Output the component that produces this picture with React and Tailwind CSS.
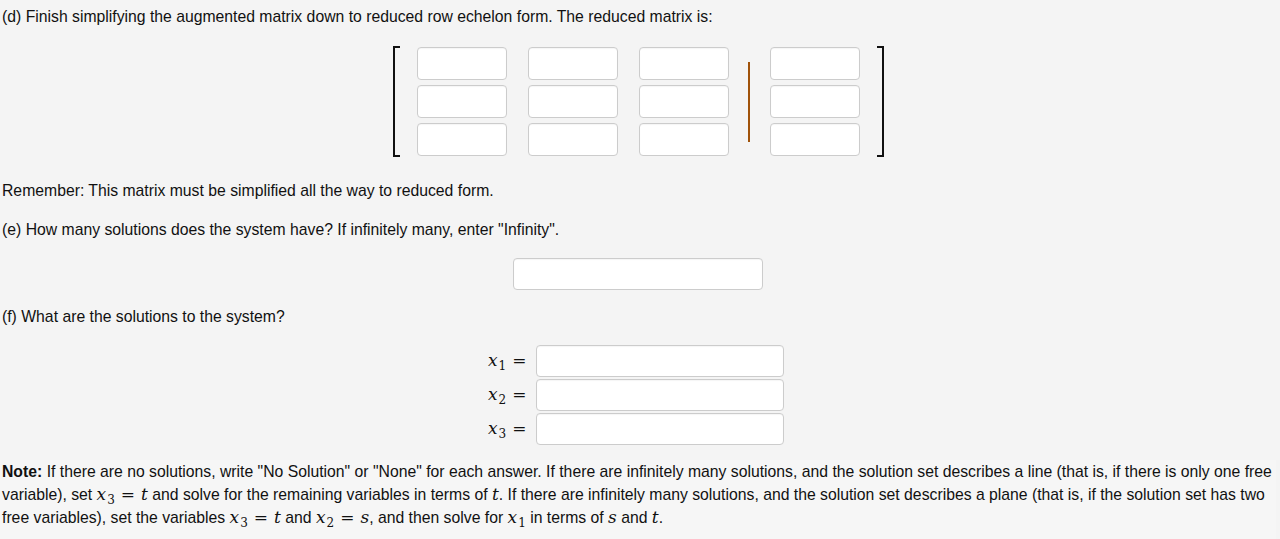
const Box = ({ className = '' }) => (
  <div className={`bg-white border border-[#cccccc] rounded-[4px] shadow-[inset_0_1px_1px_rgba(0,0,0,0.04)] ${className}`}></div>
);

const V = ({ n, sub }) => (
  <span className="font-['DejaVu_Serif',serif] italic text-[17px] leading-none">
    {n}
    {sub && <span className="not-italic text-[12px] align-[-4px] ml-[1px]">{sub}</span>}
  </span>
);

const Eq = () => (
  <span className="font-['DejaVu_Serif',serif] text-[17px] leading-none mx-[6px]">=</span>
);

const App = () => {
  const rows = [0, 1, 2];

  const col = (k) => (
    <div key={k} className="flex flex-col gap-[5px]">
      {rows.map((r) => (
        <Box key={r} className="w-[90px] h-[33px]" />
      ))}
    </div>
  );

  return (
    <div className="min-h-screen bg-[#f4f4f4] text-[#111] font-['Liberation_Sans',Arial,sans-serif] text-[15.75px]">
      <div className="w-[1276px]">
        <p className="pt-[6px] pl-[2px] leading-[22px]">
          (d) Finish simplifying the augmented matrix down to reduced row echelon form. The reduced matrix is:
        </p>

        {/* augmented matrix */}
        <div className="flex justify-center mt-[18px]">
          <div className="flex items-stretch h-[111px]">
            <div className="w-[7px] border-l-2 border-t-2 border-b-2 border-[#111]"></div>
            <div className="flex pl-[17px] py-[1px]">
              <div className="flex gap-[21px]">
                {col(0)}
                {col(1)}
                {col(2)}
              </div>
              <div className="flex items-center ml-[19px] mr-[20px]">
                <div className="w-[2px] h-[80px] bg-[#a0520a]"></div>
              </div>
              {col(3)}
            </div>
            <div className="w-[7px] ml-[17px] border-r-2 border-t-2 border-b-2 border-[#111]"></div>
          </div>
        </div>

        <p className="mt-[23px] pl-[2px] leading-[22px]">
          Remember: This matrix must be simplified all the way to reduced form.
        </p>

        <p className="mt-[17px] pl-[2px] leading-[22px]">
          (e) How many solutions does the system have? If infinitely many, enter "Infinity".
        </p>

        <div className="flex justify-center mt-[17px]">
          <Box className="w-[250px] h-[32px]" />
        </div>

        <p className="mt-[16px] pl-[2px] leading-[22px]">(f) What are the solutions to the system?</p>

        <div className="flex justify-center mt-[17px]">
          <div className="flex flex-col gap-[2px] ml-[-6px]">
            {['1', '2', '3'].map((s) => (
              <div key={s} className="flex items-center">
                <div className="w-[49px] text-right pr-[3px] whitespace-nowrap">
                  <V n="x" sub={s} />
                  <Eq />
                </div>
                <Box className="w-[248px] h-[32px]" />
              </div>
            ))}
          </div>
        </div>

        <div className="mt-[15px] bg-[#f6f6f6] pl-[2px] leading-[23px] pb-[10px]">
          <p>
            <b>Note:</b> If there are no solutions, write "No Solution" or "None" for each answer. If there are infinitely many solutions, and the solution set describes a line (that is, if there is only one free
            <br />
            variable), set <V n="x" sub="3" /><Eq /><V n="t" /> and solve for the remaining variables in terms of <V n="t" />. If there are infinitely many solutions, and the solution set describes a plane (that is, if the solution set has two
            <br />
            free variables), set the variables <V n="x" sub="3" /><Eq /><V n="t" /> and <V n="x" sub="2" /><Eq /><V n="s" />, and then solve for <V n="x" sub="1" /> in terms of <V n="s" /> and <V n="t" />.
          </p>
        </div>
      </div>
    </div>
  );
};

export default App;
